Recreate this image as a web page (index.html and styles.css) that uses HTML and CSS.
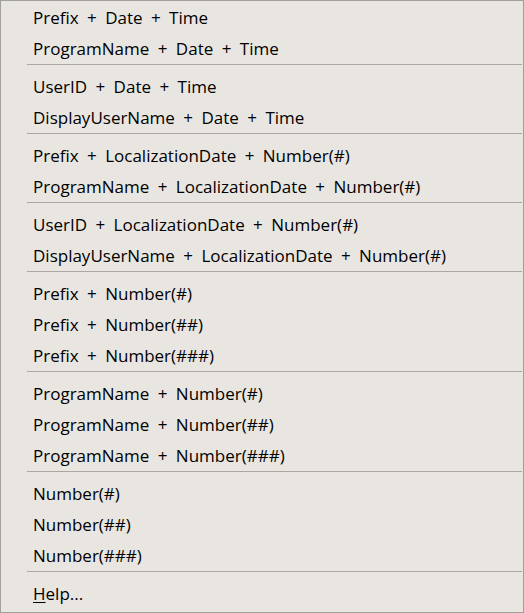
FILE: index.html
```html
<!DOCTYPE html>
<html>
<head>
<meta charset="utf-8">
<link rel="stylesheet" href="styles.css">
</head>
<body>
<div class="menu">
  <div class="item">Prefix + Date + Time</div>
  <div class="item">ProgramName + Date + Time</div>
  <div class="sep"></div>
  <div class="item">UserID + Date + Time</div>
  <div class="item">DisplayUserName + Date + Time</div>
  <div class="sep"></div>
  <div class="item">Prefix + LocalizationDate + Number(#)</div>
  <div class="item">ProgramName + LocalizationDate + Number(#)</div>
  <div class="sep"></div>
  <div class="item">UserID + LocalizationDate + Number(#)</div>
  <div class="item">DisplayUserName + LocalizationDate + Number(#)</div>
  <div class="sep"></div>
  <div class="item">Prefix + Number(#)</div>
  <div class="item">Prefix + Number(##)</div>
  <div class="item">Prefix + Number(###)</div>
  <div class="sep"></div>
  <div class="item">ProgramName + Number(#)</div>
  <div class="item">ProgramName + Number(##)</div>
  <div class="item">ProgramName + Number(###)</div>
  <div class="sep"></div>
  <div class="item">Number(#)</div>
  <div class="item">Number(##)</div>
  <div class="item">Number(###)</div>
  <div class="sep"></div>
  <div class="item"><span class="mn">H</span>elp...</div>
</div>
</body>
</html>
```
FILE: styles.css
```css
html, body {
  margin: 0;
  padding: 0;
  background: #e9e6e2;
}
.menu {
  width: 524px;
  height: 613px;
  box-sizing: border-box;
  border: 1px solid #a09f9c;
  background: #e9e6e2;
  font-family: "Open Sans", "Noto Sans", sans-serif;
  font-size: 17px;
  word-spacing: 4px;
  color: #000;
  overflow: hidden;
}
.item {
  height: 29px;
  padding-top: 2px;
  line-height: 29px;
  padding-left: 32px;
  white-space: nowrap;
}
.sep {
  height: 1px;
  margin: 1px 1px 5px 26px;
  background: #aaa7a3;
}
.mn {
  text-decoration: underline;
  text-underline-offset: 2px;
}
```
